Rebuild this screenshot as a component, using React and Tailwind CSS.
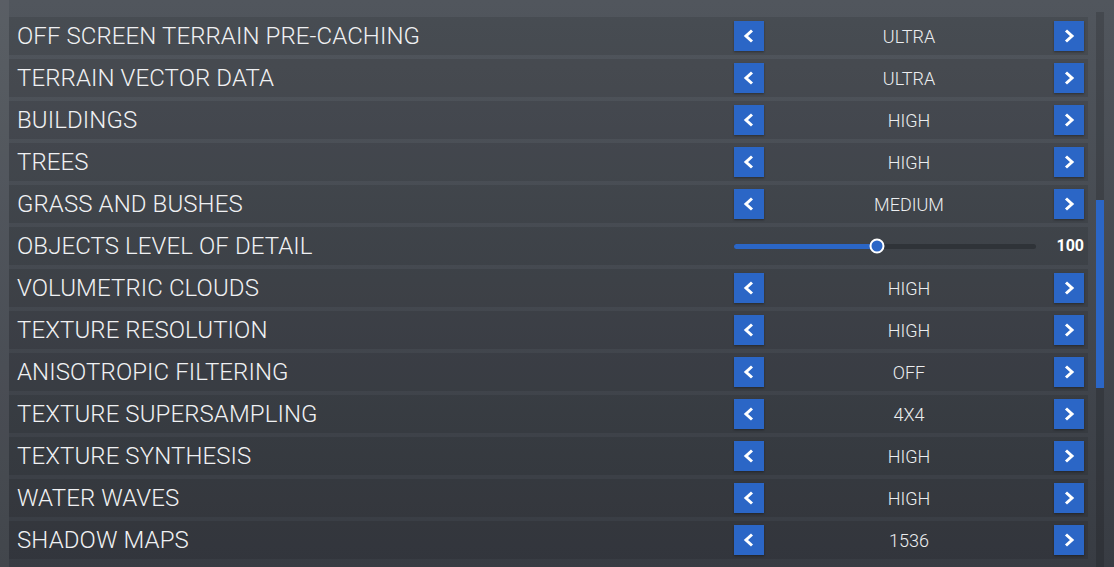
import React from 'react';

const rows = [
  { label: 'OFF SCREEN TERRAIN PRE-CACHING', value: 'ULTRA' },
  { label: 'TERRAIN VECTOR DATA', value: 'ULTRA' },
  { label: 'BUILDINGS', value: 'HIGH' },
  { label: 'TREES', value: 'HIGH' },
  { label: 'GRASS AND BUSHES', value: 'MEDIUM' },
  { label: 'OBJECTS LEVEL OF DETAIL', slider: 100, pct: 47.5 },
  { label: 'VOLUMETRIC CLOUDS', value: 'HIGH' },
  { label: 'TEXTURE RESOLUTION', value: 'HIGH' },
  { label: 'ANISOTROPIC FILTERING', value: 'OFF' },
  { label: 'TEXTURE SUPERSAMPLING', value: '4X4' },
  { label: 'TEXTURE SYNTHESIS', value: 'HIGH' },
  { label: 'WATER WAVES', value: 'HIGH' },
  { label: 'SHADOW MAPS', value: '1536' },
];

function Arrow({ dir }) {
  return (
    <button className="w-[30px] h-[30px] bg-[#2b66c6] flex items-center justify-center shadow-[0_1px_2px_rgba(0,0,0,0.35)]">
      <svg width="14" height="16" viewBox="0 0 14 16">
        {dir === 'left' ? (
          <path d="M10 2.5 L4 8 L10 13.5" stroke="white" strokeWidth="3" fill="none" strokeLinejoin="miter" />
        ) : (
          <path d="M4 2.5 L10 8 L4 13.5" stroke="white" strokeWidth="3" fill="none" strokeLinejoin="miter" />
        )}
      </svg>
    </button>
  );
}

function Selector({ value }) {
  return (
    <div className="flex items-center w-[350px]">
      <Arrow dir="left" />
      <span className="flex-1 text-center text-[18px] font-light text-[#eceef0]">{value}</span>
      <Arrow dir="right" />
    </div>
  );
}

function Slider({ value, pct }) {
  return (
    <div className="flex items-center w-[350px]">
      <div className="relative w-[302px] h-[5px] bg-[#2f3338] rounded-full">
        <div className="h-full bg-[#2b66c6] rounded-full" style={{ width: `${pct}%` }} />
        <div
          className="absolute top-1/2 -translate-y-1/2 -translate-x-1/2 w-[15px] h-[15px] rounded-full bg-[#2b66c6] border-2 border-white"
          style={{ left: `${pct}%` }}
        />
      </div>
      <span className="flex-1 text-right text-[16px] font-bold text-white">{value}</span>
    </div>
  );
}

export default function App() {
  return (
    <div
      className="w-[1114px] h-[567px] overflow-hidden flex bg-gradient-to-b from-[#51565d] to-[#383c43]"
      style={{ fontFamily: 'Roboto, "Liberation Sans", sans-serif' }}
    >
      <div className="w-[9px] bg-white/5" />
      <div className="flex-1 flex flex-col gap-[4px] pt-[17px] pr-[8px]">
        {rows.map((r) => (
          <div
            key={r.label}
            className="h-[38px] shrink-0 flex items-center justify-between bg-black/10 pl-[8px] pr-[4px]"
          >
            <span className="text-[24px] font-light text-[#f0f1f3] tracking-[0.1px]">{r.label}</span>
            {r.slider ? <Slider value={r.slider} pct={r.pct} /> : <Selector value={r.value} />}
          </div>
        ))}
      </div>
      <div className="w-[8px] mr-[10px] mt-[12px] bg-black/15 flex flex-col">
        <div className="h-[188px] bg-[#2b66c6] mt-[188px]" />
      </div>
    </div>
  );
}
